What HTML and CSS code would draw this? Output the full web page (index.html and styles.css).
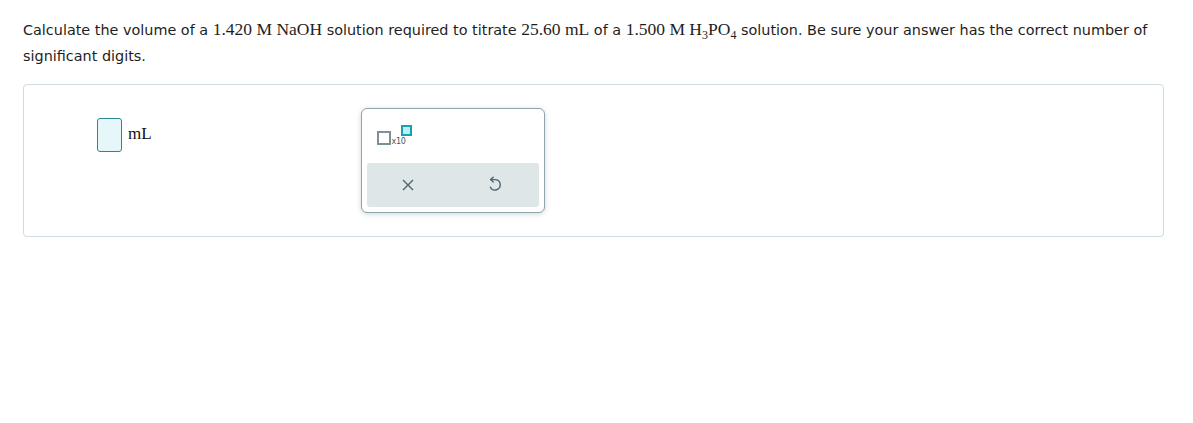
FILE: index.html
```html
<!DOCTYPE html>
<html>
<head>
<meta charset="utf-8">
<link rel="stylesheet" href="styles.css">
</head>
<body>
<div class="page">
  <p class="question">Calculate the volume of a <span class="m">1.420 M NaOH</span> solution required to titrate <span class="m">25.60 mL</span> of a <span class="m">1.500 M H<sub>3</sub>PO<sub>4</sub></span> solution. Be sure your answer has the correct number of significant digits.</p>
  <div class="answer">
    <div class="field">
      <span class="input"></span>
      <span class="unit">mL</span>
    </div>
    <div class="palette">
      <div class="tools">
        <span class="sci">
          <span class="base"></span>
          <span class="x10">x10</span>
          <span class="exp"></span>
        </span>
      </div>
      <div class="actions">
        <svg class="icon" width="14" height="14" viewBox="0 0 14 14"><path d="M2 2 L12 12 M12 2 L2 12" stroke="#4d6470" stroke-width="1.4" fill="none"/></svg>
        <svg class="icon" width="16" height="18" viewBox="0 0 16 18"><path d="M6.2 1.2 L3.6 3.6 L6.2 6" stroke="#4d6470" stroke-width="1.4" fill="none" stroke-linecap="round" stroke-linejoin="round"/><path d="M3.8 3.6 H8 A5.2 5.2 0 1 1 3.4 11.2" stroke="#4d6470" stroke-width="1.4" fill="none" stroke-linecap="round"/></svg>
      </div>
    </div>
  </div>
</div>
</body>
</html>
```
FILE: styles.css
```css
html, body { margin: 0; padding: 0; background: #fff; }
.page { padding: 16px 30px 0 23px; }
.question {
  margin: 0;
  font-family: "DejaVu Sans", Verdana, sans-serif;
  font-size: 14.4px;
  line-height: 26px;
  color: #1e1e1e;
  width: 1140px;
}
.m { font-family: "Liberation Serif", "Times New Roman", serif; font-size: 17.5px; }
.m sub { font-size: 12px; vertical-align: -4px; line-height: 0; }
.answer {
  margin-top: 15px;
  height: 153px;
  border: 1px solid #cfdde2;
  border-radius: 4px;
  display: flex;
  align-items: flex-start;
  box-sizing: border-box;
  width: 1141px;
}
.field {
  display: flex;
  align-items: center;
  margin: 33px 0 0 73px;
}
.input {
  width: 23px;
  height: 32px;
  border: 1px solid #2a8596;
  border-radius: 3px;
  background: #e6f7fa;
}
.unit {
  margin-left: 6px;
  font-family: "Liberation Serif", "Times New Roman", serif;
  font-size: 17px;
  color: #111;
  margin-top: -2px;
}
.palette {
  margin: 23px 0 0 209px;
  width: 184px;
  height: 105px;
  box-sizing: border-box;
  border: 1px solid #8fa4ab;
  border-radius: 6px;
  box-shadow: 0 1px 5px rgba(60,90,100,0.25);
  background: #fff;
  display: flex;
  flex-direction: column;
  padding: 0 5px 5px 5px;
}
.tools { height: 54px; position: relative; }
.sci { position: absolute; left: 10px; top: 16px; width: 40px; height: 24px; }
.base { position: absolute; left: 0; top: 6px; width: 10px; height: 10px; border: 2px solid #7b9199; }
.x10 { position: absolute; left: 15px; top: 12px; font-family: "DejaVu Sans", sans-serif; font-size: 8px; color: #455a64; letter-spacing: -0.4px; }
.exp { position: absolute; left: 24px; top: 0; width: 7px; height: 7px; border: 2px solid #1aa0b5; background: #b9eef5; }
.actions {
  flex: 1;
  background: #dfe6e8;
  border-radius: 3px;
  display: flex;
  align-items: center;
  gap: 72px;
  padding-left: 34px;
}
.icon { display: block; }
```
